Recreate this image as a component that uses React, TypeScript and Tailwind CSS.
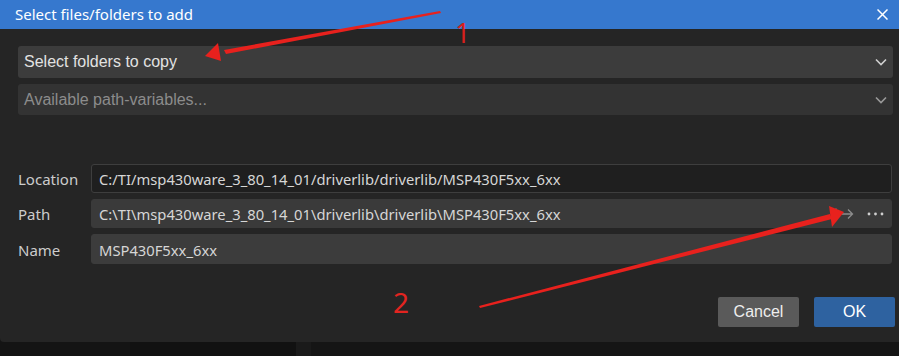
import React from 'react';

const Chevron: React.FC<{ color: string }> = ({ color }) => (
  <svg width="12" height="8" viewBox="0 0 12 8" fill="none">
    <path d="M1 1.5L6 6.5L11 1.5" stroke={color} strokeWidth="1.6" />
  </svg>
);

const rows = [
  { label: 'Location', value: 'C:/TI/msp430ware_3_80_14_01/driverlib/driverlib/MSP430F5xx_6xx', box: 'h-[29px] bg-[#1f1f1f] border border-[#3e3e3e]', tools: false },
  { label: 'Path', value: 'C:\\TI\\msp430ware_3_80_14_01\\driverlib\\driverlib\\MSP430F5xx_6xx', box: 'h-[29px] bg-[#3a3a3a] border border-[#3a3a3a]', tools: true },
  { label: 'Name', value: 'MSP430F5xx_6xx', box: 'h-[30px] bg-[#3c3c3c] border border-[#3c3c3c]', tools: false },
];

const App: React.FC = () => {
  return (
    <div className="relative w-[899px] h-[356px] bg-[#141414] overflow-hidden flex flex-col">
      <div className="h-[342px] bg-[#252525] rounded-bl-[4px] flex flex-col">
        <div className="h-[29px] bg-[#3678ce] flex items-center justify-between pl-[15px] pr-[11px]">
          <span className="text-white text-[15px] font-['Noto_Sans',sans-serif]">Select files/folders to add</span>
          <svg width="11" height="11" viewBox="0 0 11 11">
            <path d="M0.5 0.5L10.5 10.5M10.5 0.5L0.5 10.5" stroke="#fff" strokeWidth="1.5" />
          </svg>
        </div>

        <div className="flex flex-col pl-[18px] pr-[6px] font-['Liberation_Sans',Arial,sans-serif]">
          <div className="mt-[17px] h-[32px] bg-[#3c3c3c] rounded-[3px] flex items-center justify-between pl-[6px] pr-[6px]">
            <span className="text-[16px] text-[#e2e2e2]">Select folders to copy</span>
            <Chevron color="#cfcfcf" />
          </div>
          <div className="mt-[6px] h-[31px] bg-[#333333] rounded-[3px] flex items-center justify-between pl-[6px] pr-[6px]">
            <span className="text-[16px] text-[#8c8c8c]">Available path-variables...</span>
            <Chevron color="#9a9a9a" />
          </div>
        </div>

        <div className="mt-[49px] flex flex-col gap-[6px] pl-[18px] pr-[7px] font-['Noto_Sans',sans-serif]">
          {rows.map((r) => (
            <div key={r.label} className="flex items-center">
              <span className="w-[73px] pt-[2px] text-[15px] text-[#cccccc]">{r.label}</span>
              <div className={`flex-1 rounded-[3px] flex items-center justify-between pl-[7px] pr-[7px] ${r.box}`}>
                <span className="pt-[2px] text-[14.75px] text-[#d6d6d6] whitespace-nowrap">{r.value}</span>
                {r.tools && (
                  <div className="flex items-center gap-[13px]">
                    <svg width="19" height="12" viewBox="0 0 19 12" fill="none">
                      <path d="M1 0.5V11.5M1 6H17.5M13 1.5L17.5 6L13 10.5" stroke="#8c8c8c" strokeWidth="1.3" />
                    </svg>
                    <svg width="17" height="4" viewBox="0 0 17 4">
                      <circle cx="2" cy="2" r="1.4" fill="#cfcfcf" />
                      <circle cx="8.5" cy="2" r="1.4" fill="#cfcfcf" />
                      <circle cx="15" cy="2" r="1.4" fill="#cfcfcf" />
                    </svg>
                  </div>
                )}
              </div>
            </div>
          ))}
        </div>

        <div className="mt-auto mb-[15px] flex justify-end gap-[15px] pr-[4px] font-['Liberation_Sans',Arial,sans-serif]">
          <button className="w-[81px] h-[30px] bg-[#5a5a5a] rounded-[2px] text-[16px] text-[#eeeeee]">Cancel</button>
          <button className="w-[81px] h-[30px] bg-[#2e62a0] rounded-[2px] text-[16px] text-white">OK</button>
        </div>
      </div>

      <div className="flex-1 flex">
        <div className="w-[130px] bg-[#141414]" />
        <div className="w-[166px] bg-[#111111]" />
        <div className="w-[15px] bg-[#1a1a1a]" />
        <div className="flex-1 bg-[#151515]" />
      </div>

      <svg className="absolute inset-0 pointer-events-none" width="899" height="356" viewBox="0 0 899 356">
        <polygon points="440,11 441,13 226,54 224,50" fill="#e8211d" />
        <polygon points="205,56 218,43 221,61" fill="#e8211d" />
        <polygon points="480,308 479,306 830,214 832,219" fill="#e8211d" />
        <polygon points="844,212 829,206 832,227" fill="#e8211d" />
        <text x="455" y="43" fill="#d8201c" fontSize="27" fontFamily="'Noto Sans', sans-serif">1</text>
        <text x="393" y="313" fill="#e22420" fontSize="28" fontFamily="'Noto Sans', sans-serif">2</text>
      </svg>
    </div>
  );
};

export default App;
